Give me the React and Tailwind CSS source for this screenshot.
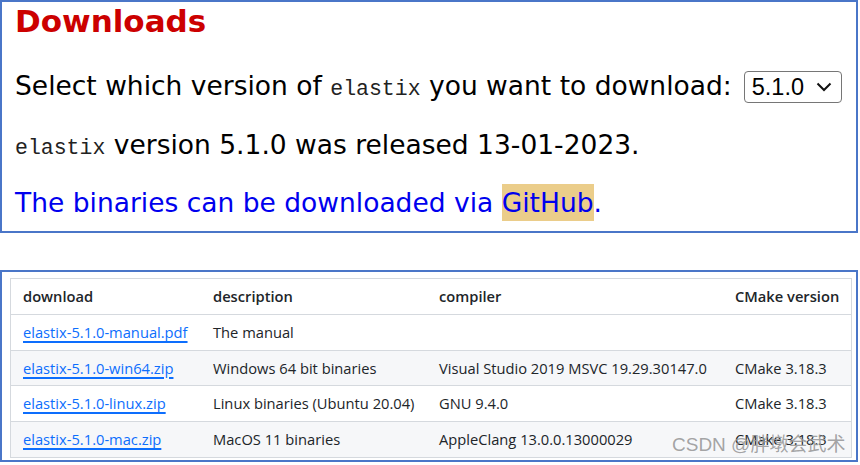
const rows = [
  { file: 'elastix-5.1.0-manual.pdf', desc: 'The manual', compiler: '', cmake: '' },
  { file: 'elastix-5.1.0-win64.zip', desc: 'Windows 64 bit binaries', compiler: 'Visual Studio 2019 MSVC 19.29.30147.0', cmake: 'CMake 3.18.3' },
  { file: 'elastix-5.1.0-linux.zip', desc: 'Linux binaries (Ubuntu 20.04)', compiler: 'GNU 9.4.0', cmake: 'CMake 3.18.3' },
  { file: 'elastix-5.1.0-mac.zip', desc: 'MacOS 11 binaries', compiler: 'AppleClang 13.0.0.13000029', cmake: 'CMake 3.18.3' },
]

const mono = "font-['Liberation_Mono',monospace] text-[21.5px] font-normal text-[#222]"

export default function App() {
  return (
    <div className="h-[465px] w-[860px] overflow-hidden bg-white">
      <section className="h-[233px] w-[858px] border-2 border-[#4a76c8] px-[13px] font-['DejaVu_Sans',sans-serif] text-[26.5px] text-black">
        <h1 className="h-[38px] text-[31px] font-bold leading-[38px] text-[#cc0000]">Downloads</h1>
        <p className="mt-[27px] flex h-[40px] items-center whitespace-nowrap leading-[40px]">
          <span>
            Select which version of <span className={mono}>elastix</span> you want to download:
          </span>
          <span className="ml-[12px] flex h-[32px] w-[98px] items-center justify-between rounded-[4px] border border-[#767676] pl-[7px] pr-[9px] font-['Liberation_Sans',sans-serif] text-[23.5px]">
            5.1.0
            <svg width="16" height="10" viewBox="0 0 16 10" fill="none" stroke="#111" strokeWidth="2">
              <path d="M1.5 1.5 L8 8 L14.5 1.5" />
            </svg>
          </span>
        </p>
        <p className="mt-[18px] h-[40px] leading-[40px]">
          <span className={mono}>elastix</span> version 5.1.0 was released 13-01-2023.
        </p>
        <p className="mt-[18px] h-[40px] leading-[40px] text-[#0000ee]">
          The binaries can be downloaded via <span className="bg-[#ebcd8a] py-[3px]">GitHub</span>.
        </p>
      </section>

      <section className="mt-[37px] h-[192px] w-[858px] border-2 border-[#4a76c8] pl-[8px] pr-[4px] pt-[6px] font-['Open_Sans',sans-serif] text-[14.7px] text-[#212529]">
        <div className="border border-[#d5d9de]">
          <div className="grid h-[36px] grid-cols-[190px_226px_296px_1fr] items-center whitespace-nowrap border-b border-[#d5d9de] px-[12px] font-semibold">
            <span>download</span>
            <span>description</span>
            <span>compiler</span>
            <span>CMake version</span>
          </div>
          {rows.map((r, i) => (
            <div
              key={r.file}
              className={`grid h-[35.5px] grid-cols-[190px_226px_296px_1fr] items-center whitespace-nowrap px-[12px] ${i < 3 ? 'border-b border-[#d5d9de]' : ''} ${i % 2 === 1 ? 'bg-[#f6f7f9]' : 'bg-white'}`}
            >
              <a href="#" className="text-[#0d6efd] underline decoration-[1.5px] underline-offset-[3px]">{r.file}</a>
              <span>{r.desc}</span>
              <span>{r.compiler}</span>
              <span className="relative">
                {r.cmake}
                {i === 3 && (
                  <span className="absolute left-[-63px] top-[3px] font-['Liberation_Sans','Noto_Sans_CJK_SC',sans-serif] text-[19px] text-[#999]/90">
                    CSDN @胖墩会武术
                  </span>
                )}
              </span>
            </div>
          ))}
        </div>
      </section>
    </div>
  )
}
